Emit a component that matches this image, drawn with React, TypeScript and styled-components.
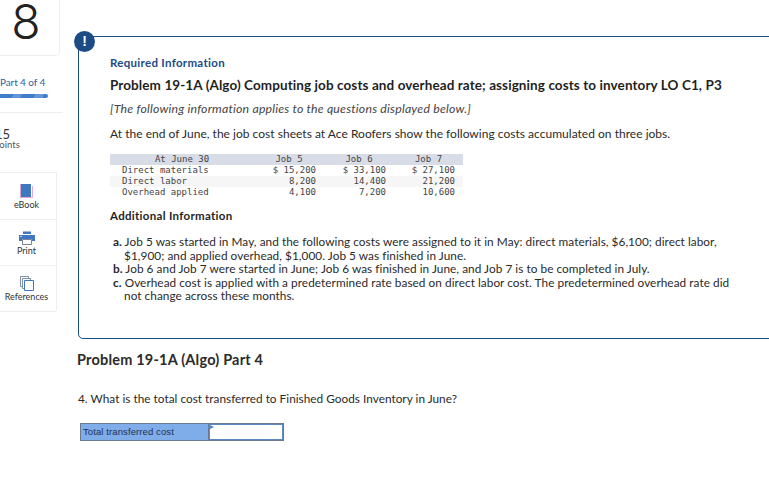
import React from "react";
import styled, { createGlobalStyle } from "styled-components";

const Global = createGlobalStyle`
  html, body { margin: 0; padding: 0; background: #fff; }
  body { width: 769px; height: 502px; overflow: hidden; font-family: "Lato", "Liberation Sans", sans-serif; color: #1f1f1f; }
`;
const Page = styled.div`display: flex; width: 769px; height: 502px; overflow: hidden;`;
const Sidebar = styled.aside`width: 63px; flex: none; display: flex; flex-direction: column;`;
const NumberCard = styled.div`
  width: 73px; height: 57px; margin-left: -13px; margin-top: -1px; box-sizing: border-box;
  border: 1px solid #eeeeee; border-top: 0; border-radius: 0 0 5px 5px;
  display: flex; justify-content: center; align-items: center;
  font: 300 48px/1 "Inter", sans-serif; color: #222; padding-right: 7px; padding-left: 12px; padding-bottom: 11px; overflow: hidden;
`;
const PartLabel = styled.div`margin-top: 19px; font-size: 10px; line-height: 14px; color: #2f5f9f; padding-bottom: 5px; letter-spacing: -.1px;`;
const Progress = styled.div`width: 48px; height: 4px; border-radius: 0 2px 2px 0; background: repeating-linear-gradient(115deg, #3f7fc9 0 12px, #6296d6 12px 20px);`;
const Rule = styled.div`width: 63px; height: 1px; background: #eeeeee; margin-top: 14px;`;
const Score = styled.div`margin-top: 16px; margin-left: -5px; font-size: 13px; line-height: 11px; color: #333;`;
const PointsLabel = styled.div`margin-left: -6px; font-size: 9.5px; line-height: 10px; color: #555;`;
const Tools = styled.div`margin-top: 22px; width: 57px; box-sizing: border-box; border: 1px solid #eeeeee; border-left: 0; border-radius: 0 0 3px 0;`;
const Tool = styled.div`
  height: 46px; display: flex; flex-direction: column; align-items: center; justify-content: flex-end;
  padding: 0 3px 9px 0; box-sizing: border-box; font-size: 9px; line-height: 10px; color: #333; gap: 1px;
  & + & { border-top: 1px solid #eeeeee; }
`;
const Main = styled.main`flex: 1; padding: 36px 0 0 15px; min-width: 0;`;
const InfoBox = styled.section`
  position: relative; width: 720px; height: 303px; box-sizing: border-box;
  border: 1px solid #1d4b85; border-radius: 0 0 0 5px; padding: 19px 0 0 31px;
`;
const Badge = styled.div`
  position: absolute; left: -5px; top: -6px; width: 21px; height: 21px; border-radius: 50%;
  background: #1d4b85; color: #fff; font: 700 14px/21px "Liberation Sans", sans-serif; text-align: center;
`;
const Required = styled.h4`margin: 0; font-size: 11.5px; line-height: 14px; font-weight: 700; color: #1d4b85; letter-spacing: .3px;`;
const Title = styled.h3`margin: 7px 0 0; font-size: 13.5px; line-height: 17px; font-weight: 700; color: #1f1f1f; white-space: nowrap; letter-spacing: .09px;`;
const Note = styled.p`margin: 7px 0 0; font-size: 12.3px; line-height: 15px; font-style: italic; color: #444; white-space: nowrap; letter-spacing: .2px;`;
const Body = styled.p`margin: 10px 0 0; font-size: 12px; line-height: 15px; color: #2a2a2a; white-space: nowrap; letter-spacing: .02px;`;
const CostTable = styled.div`margin: 13px 0 0; width: 353px; font: 9px/11px "DejaVu Sans Mono", "Liberation Mono", monospace; color: #444;`;
const CostRow = styled.div<{ $bg?: string }>`
  display: grid; grid-template-columns: 144px 70px 70px 69px; background: ${p => p.$bg || "transparent"}; height: 11px;
`;
const Label = styled.div<{ $center?: boolean }>`padding-left: ${p => p.$center ? 0 : 12}px; text-align: ${p => p.$center ? "center" : "left"}; white-space: pre;`;
const Cell = styled.div`white-space: pre; text-align: right; padding-right: 8px;`;
const HeadCell = styled.div`white-space: pre; text-align: center;`;
const Subhead = styled.h4`margin: 11px 0 0; font-size: 11.5px; line-height: 14px; font-weight: 700; color: #1f1f1f; letter-spacing: .3px;`;
const List = styled.div`margin: 12px 0 0; display: flex; flex-direction: column;`;
const Item = styled.div`
  padding-left: 14px; text-indent: -11px; width: 622px; font-size: 11.8px; line-height: 13.6px; color: #2a2a2a; letter-spacing: .05px;
  b { font-weight: 700; }
`;
const PartHeading = styled.h3`margin: 12px 0 0 -1px; font-size: 14.5px; line-height: 18px; font-weight: 700; color: #2b2b2b; letter-spacing: .2px;`;
const Question = styled.p`margin: 22px 0 0; font-size: 11.8px; line-height: 15px; color: #2a2a2a; letter-spacing: .02px;`;
const Answer = styled.div`margin: 17px 0 0 2px; display: flex; width: 204px; height: 18px; box-sizing: border-box; border: 1px solid #6a7a90;`;
const AnswerLabel = styled.div`width: 128px; box-sizing: border-box; background: #7fadea; border-right: 1px solid #6a7a90; padding-left: 2px; font: 9.5px/16px "Liberation Sans", sans-serif; color: #1f2f4f; letter-spacing: .1px;`;
const AnswerInput = styled.div`
  position: relative; flex: 1; background: #fff; border: 1px solid #5b88c0;
  &::before { content: ""; position: absolute; left: 0; top: 0; border-left: 4px solid #4a86cf; border-top: 2.5px solid transparent; border-bottom: 2.5px solid transparent; }
`;

const BookIcon = () => (
  <svg width="15" height="16" viewBox="0 0 15 16">
    <path d="M2 1h10v13H2z" fill="#3f78c0" />
    <path d="M2 14.5h11.5V3" fill="none" stroke="#e2a9c8" strokeWidth="1" />
    <path d="M1.5 1v14" stroke="#d9a6d0" strokeWidth="1" />
  </svg>
);
const PrintIcon = () => (
  <svg width="16" height="14" viewBox="0 0 16 14">
    <path d="M4 0.5h8V3H4z" fill="#3f78c0" />
    <path d="M0 4h16v6h-3V8H3v2H0z" fill="#3f78c0" />
    <path d="M3.5 8.5h9v5h-9z" fill="#fff" stroke="#4a4a6a" strokeWidth=".7" />
    <circle cx="2" cy="5.5" r=".7" fill="#fff" />
  </svg>
);
const RefIcon = () => (
  <svg width="14" height="15" viewBox="0 0 14 15" fill="#fff">
    <path d="M.5.5h8v10h-8z" stroke="#7d8fa8" />
    <path d="M2.5 2.5h8v10h-8z" stroke="#7d8fa8" />
    <path d="M4.5 4.5h9v10h-9z" stroke="#3f78c0" />
  </svg>
);

export default function App() {
  return (
    <Page>
      <Global />
      <Sidebar>
        <NumberCard>8</NumberCard>
        <PartLabel>Part 4 of 4</PartLabel>
        <Progress />
        <Rule />
        <Score>15</Score>
        <PointsLabel>points</PointsLabel>
        <Tools>
          <Tool><BookIcon />eBook</Tool>
          <Tool><PrintIcon />Print</Tool>
          <Tool><RefIcon />References</Tool>
        </Tools>
      </Sidebar>
      <Main>
        <InfoBox>
          <Badge>!</Badge>
          <Required>Required Information</Required>
          <Title>Problem 19-1A (Algo) Computing job costs and overhead rate; assigning costs to inventory LO C1, P3</Title>
          <Note>[The following information applies to the questions displayed below.]</Note>
          <Body>At the end of June, the job cost sheets at Ace Roofers show the following costs accumulated on three jobs.</Body>
          <CostTable>
            <CostRow $bg="#d8dce6"><Label $center>At June 30</Label><HeadCell>Job 5</HeadCell><HeadCell>Job 6</HeadCell><HeadCell>Job 7</HeadCell></CostRow>
            <CostRow><Label>Direct materials</Label><Cell>$ 15,200</Cell><Cell>$ 33,100</Cell><Cell>$ 27,100</Cell></CostRow>
            <CostRow $bg="#f6f6f6"><Label>Direct labor</Label><Cell>8,200</Cell><Cell>14,400</Cell><Cell>21,200</Cell></CostRow>
            <CostRow><Label>Overhead applied</Label><Cell>4,100</Cell><Cell>7,200</Cell><Cell>10,600</Cell></CostRow>
          </CostTable>
          <Subhead>Additional Information</Subhead>
          <List>
            <Item><b>a.</b> Job 5 was started in May, and the following costs were assigned to it in May: direct materials, $6,100; direct labor, $1,900; and applied overhead, $1,000. Job 5 was finished in June.</Item>
            <Item><b>b.</b> Job 6 and Job 7 were started in June; Job 6 was finished in June, and Job 7 is to be completed in July.</Item>
            <Item><b>c.</b> Overhead cost is applied with a predetermined rate based on direct labor cost. The predetermined overhead rate did not change across these months.</Item>
          </List>
        </InfoBox>
        <PartHeading>Problem 19-1A (Algo) Part 4</PartHeading>
        <Question>4. What is the total cost transferred to Finished Goods Inventory in June?</Question>
        <Answer>
          <AnswerLabel>Total transferred cost</AnswerLabel>
          <AnswerInput />
        </Answer>
      </Main>
    </Page>
  );
}
